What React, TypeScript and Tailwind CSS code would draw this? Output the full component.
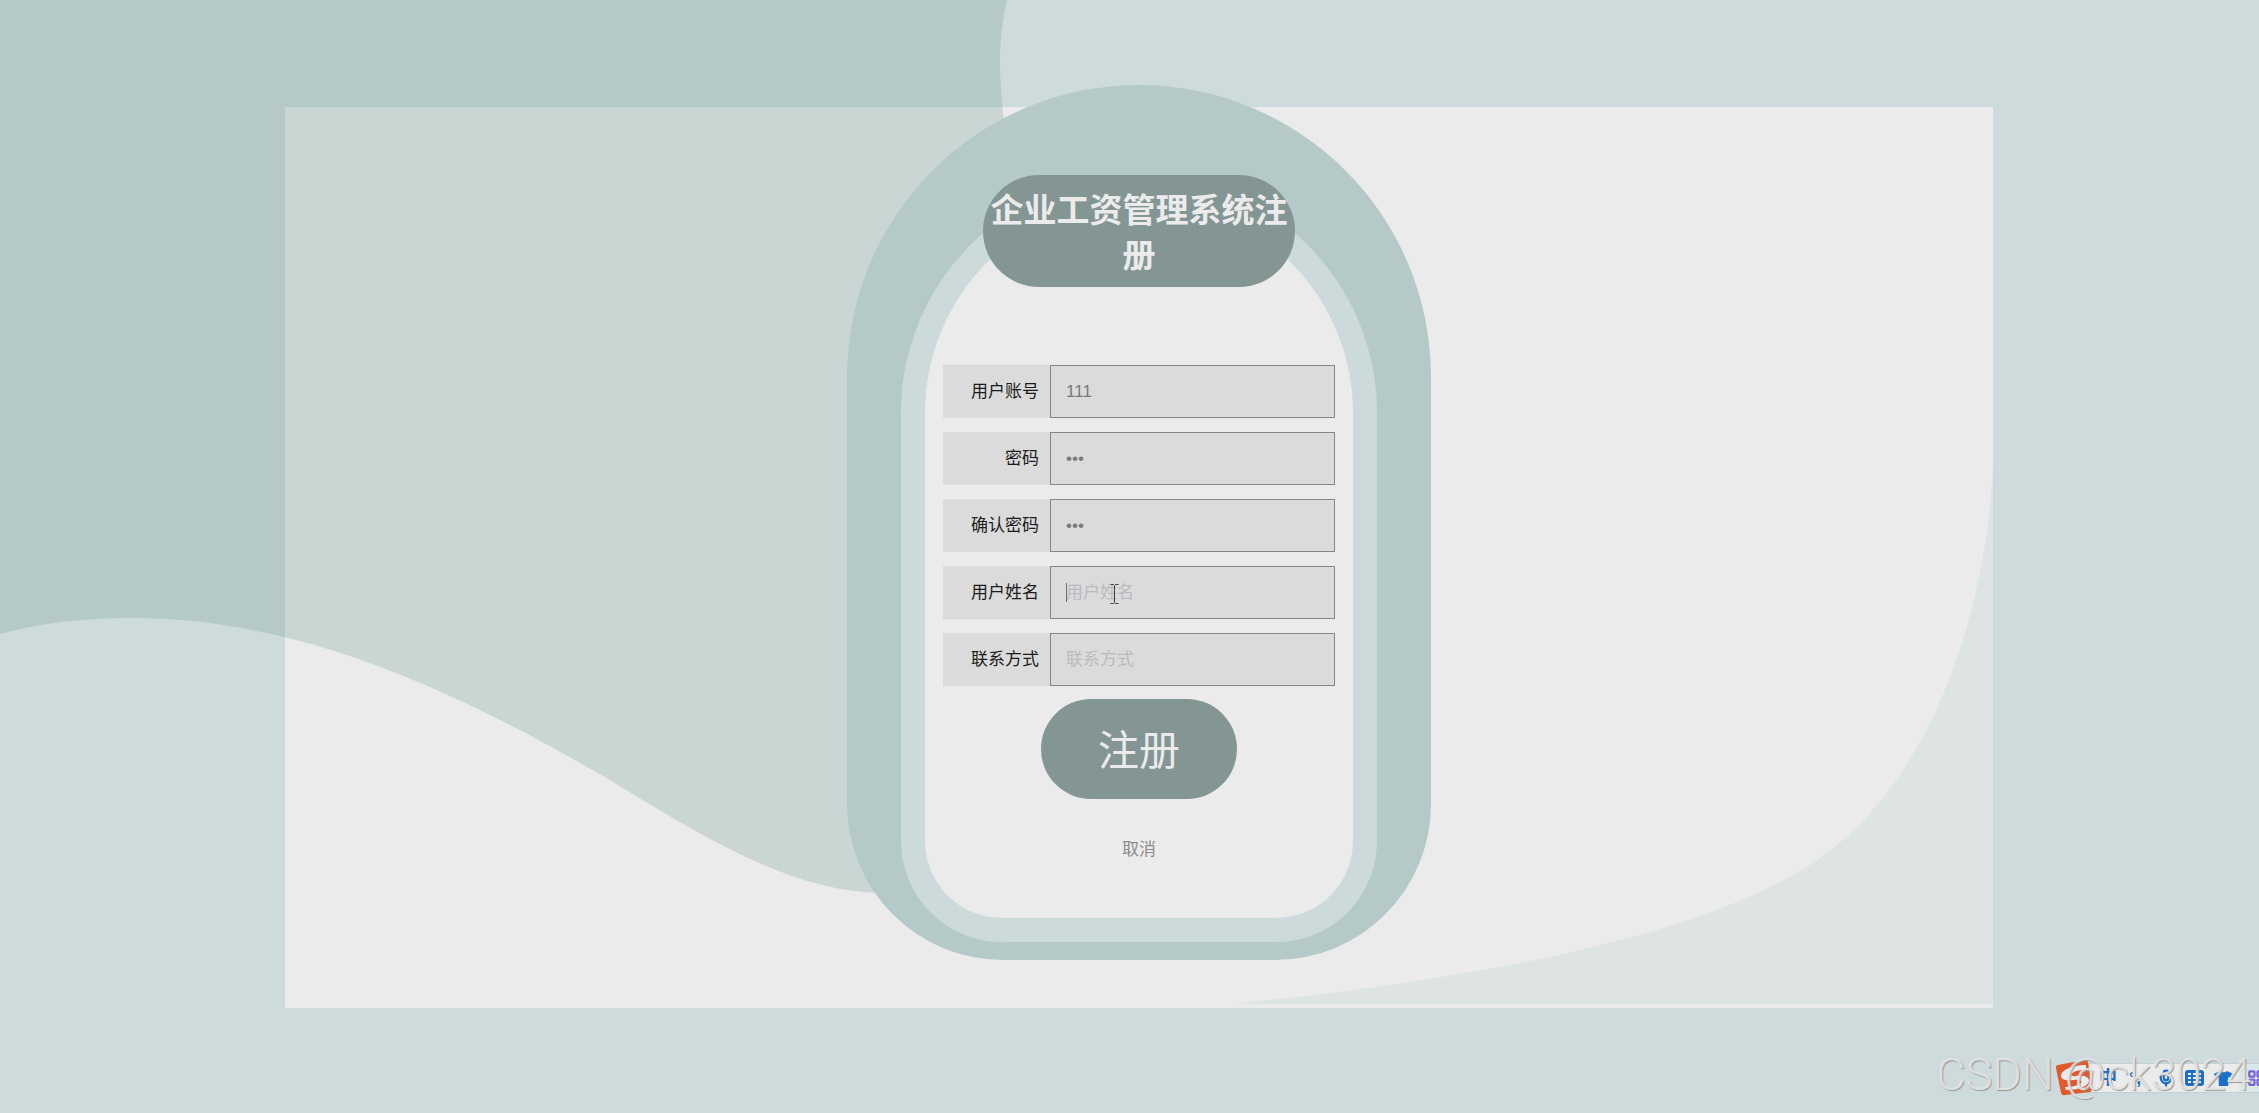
import { LayoutGrid, Mic } from "lucide-react";
import { FaTshirt } from "react-icons/fa";

const fields = [
  { id: "account", label: "用户账号", type: "text", value: "111" },
  { id: "password", label: "密码", type: "password", value: "111" },
  { id: "confirm", label: "确认密码", type: "password", value: "111" },
  { id: "name", label: "用户姓名", type: "text", value: "", active: true },
  { id: "phone", label: "联系方式", type: "text", value: "" },
];

const WAVE =
  "M0 0H1007C1002 22 1000 42 1000 62C1000 85 1002 102 1004 122C1020 300 1060 893 885 893C800 893 720 848 610 780C455 690 300 618 132 618C85 618 45 622 0 634Z";

const Background = () => (
  <svg
    className="absolute inset-0 h-full w-full"
    viewBox="0 0 2259 1113"
    preserveAspectRatio="none"
    aria-hidden="true"
  >
    <path fill="#b5cac8" d={WAVE} />
  </svg>
);

const PanelShapes = () => (
  <svg
    className="absolute inset-0 h-full w-full"
    viewBox="0 0 1708 901"
    preserveAspectRatio="none"
    aria-hidden="true"
  >
    <path fill="#c9d6d4" transform="translate(-285 -107)" d={WAVE} />
    <path
      fill="#dee4e3"
      d="M1708 360C1700 520 1640 680 1531 754C1420 829 1190 873 947 897H1708Z"
    />
  </svg>
);

const Field = ({ id, label, type, value, active }: (typeof fields)[number]) => (
  <div className="relative flex h-[53px] text-[17px]">
    <label
      htmlFor={id}
      className="flex w-[107px] items-center justify-end bg-[#dbdbdb] pt-px pr-[11px] text-[#1c1c1c]"
    >
      {label}
    </label>
    <input
      id={id}
      type={type}
      defaultValue={value}
      placeholder={label}
      className="min-w-0 flex-1 border border-[#868686] bg-[#dbdbdb] px-[15px] text-[#7a7a7a] outline-none placeholder:text-[#b9bbc0]"
    />
    {active && (
      <>
        <span className="absolute top-[17px] left-[123px] h-[19px] w-px bg-[#6b6b6b]" />
        <svg
          className="absolute top-[18px] left-[167px]"
          width="9"
          height="20"
          viewBox="0 0 9 20"
          fill="none"
          stroke="#3c3c3c"
          aria-hidden="true"
        >
          <path d="M0.5 0.5H3.5L4.5 1.5L5.5 0.5H8.5M4.5 1.5V18.5M0.5 19.5H3.5L4.5 18.5L5.5 19.5H8.5" />
        </svg>
      </>
    )}
  </div>
);

const RegisterCard = () => (
  <div className="relative w-[584px] rounded-t-[292px] rounded-b-[156px] bg-[#b5cac8] px-[54px] pt-[90px] pb-[18px]">
    <div className="rounded-t-[238px] rounded-b-[101px] border-[24px] border-[#ccdadb] bg-[#ebebeb] px-[18px] pb-[56px]">
      <h1 className="relative mx-auto -mt-6 flex h-[112px] w-[312px] items-center justify-center rounded-full bg-[#849693] pt-1 text-center text-[33px] leading-[45px] font-bold text-[#ebebeb]">
        企业工资管理系统注册
      </h1>

      <form
        className="mt-[78px] flex flex-col"
        onSubmit={(e) => e.preventDefault()}
      >
        <div className="flex flex-col gap-[14px]">
          {fields.map((field) => (
            <Field key={field.id} {...field} />
          ))}
        </div>
        <button
          type="submit"
          className="mt-[13px] h-[100px] w-[196px] self-center rounded-full bg-[#849693] pt-1 text-[41px] leading-[60px] text-[#ebebeb]"
        >
          注册
        </button>
        <a
          href="#"
          className="mt-[39px] self-center text-[17px] leading-6 text-[#8b8b8b]"
        >
          取消
        </a>
      </form>
    </div>
  </div>
);

const InputBar = () => (
  <div className="absolute right-0 bottom-5 flex h-[30px] w-[172px] items-center border-y border-[#c3d0d6] bg-[#ebebeb] text-[#1b6fc9]">
    {/* Logo */}
    <svg
      className="absolute -top-[5px] -left-[32px]"
      width="38"
      height="38"
      viewBox="0 0 38 38"
      aria-hidden="true"
    >
      <path
        fill="#e2592a"
        d="M3 6Q1 6 1 9L6 34Q7 37 10 36L35 33Q37 32 37 29L33 3Q32 0 29 1Z"
      />
      <path
        fill="#ebebeb"
        d="M31 6C17 6 6 11 6 17C6 21 12 22 18 21C25 20 29 22 25 25C22 27 16 28 10 28L11 31C22 31 33 28 34 22C34 17 28 16 21 17C15 18 15 15 19 13C23 11 28 11 31 11Z"
      />
    </svg>
    <div className="flex w-full items-center pl-3">
      <span className="w-[30px] text-[18px] leading-6 font-bold">中</span>
      <span className="w-[28px] text-[18px] leading-6 font-bold">°,</span>
      <Mic size={18} strokeWidth={3} className="mr-[10px] shrink-0" />
      <svg
        className="mr-[10px] shrink-0"
        width="19"
        height="16"
        viewBox="0 0 19 16"
        aria-hidden="true"
      >
        <rect width="19" height="16" rx="3" fill="currentColor" />
        <path
          stroke="#ebebeb"
          strokeWidth="2"
          d="M3 4H6M8 4H11M13 4H16M3 8H6M8 8H11M13 8H16M3 12H6M8 12H11M13 12H16"
        />
      </svg>
      <FaTshirt size={19} className="shrink-0" />
    </div>
    <div className="flex h-full w-[20px] shrink-0 items-center overflow-hidden bg-[#d8e8e8] pl-2 text-[#7a63d6]">
      <LayoutGrid size={18} strokeWidth={3} className="shrink-0" />
    </div>
  </div>
);

const App = () => {
  return (
    <main className="relative min-h-screen overflow-hidden bg-[#cddbdc] pt-[107px] pr-[266px] pb-[105px] pl-[285px] font-['Liberation_Sans','Noto_Sans_CJK_SC',sans-serif]">
      <Background />

      <section className="relative flex justify-center bg-[#ebebeb] pb-12">
        <PanelShapes />
        <div className="-mt-[22px]">
          <RegisterCard />
        </div>
      </section>

      <InputBar />
      <p className="absolute right-2 bottom-3 font-['Roboto',sans-serif] text-[45px] leading-[52px] font-light whitespace-nowrap text-[#e6e6e6]/90 [text-shadow:1px_1px_1px_#999]">
        CSDN @ck3024
      </p>
    </main>
  );
};

export default App;
